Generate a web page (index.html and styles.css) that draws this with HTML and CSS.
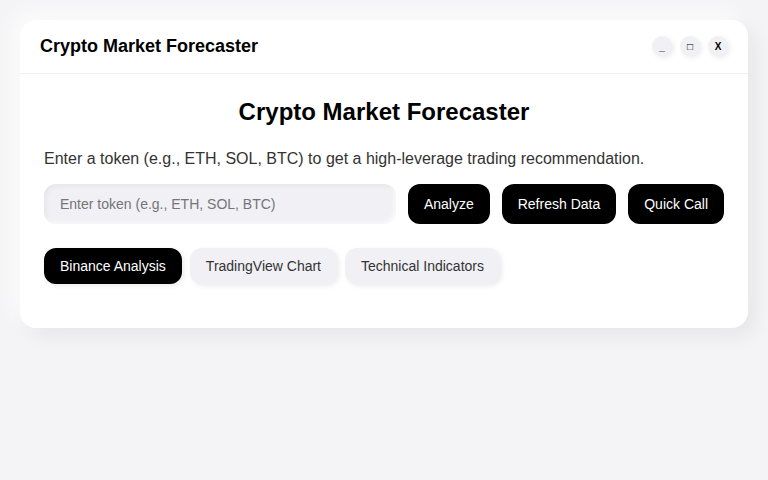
FILE: index.html
```html
<!DOCTYPE html>
<html lang="en">
<head>
<meta charset="utf-8">
<meta name="viewport" content="width=device-width, initial-scale=1">
<title>Crypto Market Forecaster</title>
<link rel="stylesheet" href="styles.css">
</head>
<body>
<div class="window">
  <header class="title-bar">
    <div class="title-text">Crypto Market Forecaster</div>
    <div class="controls">
      <button class="control" type="button" aria-label="Minimize">_</button>
      <button class="control" type="button" aria-label="Maximize">□</button>
      <button class="control" type="button" aria-label="Close">X</button>
    </div>
  </header>
  <main class="content">
    <h1>Crypto Market Forecaster</h1>
    <label class="intro" for="token">Enter a token (e.g., ETH, SOL, BTC) to get a high-leverage trading recommendation.</label>
    <form class="token-form">
      <input id="token" type="text" placeholder="Enter token (e.g., ETH, SOL, BTC)">
      <button class="action" type="button">Analyze</button>
      <button class="action" type="button">Refresh Data</button>
      <button class="action" type="button">Quick Call</button>
    </form>
    <nav class="tabs">
      <button class="tab active" type="button">Binance Analysis</button>
      <button class="tab" type="button">TradingView Chart</button>
      <button class="tab" type="button">Technical Indicators</button>
    </nav>
  </main>
</div>
</body>
</html>
```
FILE: styles.css
```css
* { box-sizing: border-box; }

body {
  margin: 0;
  padding: 20px;
  background: #f4f4f6;
  color: #333;
  font-family: "Liberation Sans", Arial, sans-serif;
}

button, input { font-family: inherit; }

.window {
  background: #fff;
  border-radius: 16px;
  box-shadow: 8px 8px 20px rgba(0, 0, 0, 0.06), -8px -8px 20px rgba(255, 255, 255, 0.8);
  overflow: hidden;
}

.title-bar {
  display: flex;
  justify-content: space-between;
  align-items: flex-start;
  padding: 16px 20px;
  border-bottom: 1px solid #f0f0f2;
}

.title-text {
  color: #000;
  font-size: 18px;
  font-weight: 700;
  line-height: 21px;
}

.controls {
  display: flex;
  gap: 8px;
}

.control {
  width: 20px;
  height: 20px;
  padding: 0;
  border: 0;
  border-radius: 50%;
  background: #f0f0f5;
  color: #000;
  font-size: 10px;
  font-weight: 700;
  box-shadow: 2px 2px 5px rgba(0, 0, 0, 0.08), -2px -2px 5px rgba(255, 255, 255, 0.8);
}

.content { padding: 24px; }

h1 {
  margin: 0 0 24px;
  color: #000;
  font-size: 24px;
  line-height: 28px;
  text-align: center;
}

.intro {
  display: block;
  margin-bottom: 16px;
  font-size: 16px;
  line-height: 18px;
}

.token-form {
  display: flex;
  gap: 12px;
  margin-bottom: 24px;
}

.token-form input {
  flex: 1;
  min-width: 0;
  padding: 12px 16px;
  border: 0;
  border-radius: 12px;
  background: #f0f0f5;
  font-size: 14px;
  box-shadow: inset 2px 2px 5px rgba(0, 0, 0, 0.05), inset -2px -2px 5px rgba(255, 255, 255, 0.8);
}

.action {
  padding: 12px 16px;
  border: 0;
  border-radius: 12px;
  background: #000;
  color: #fff;
  font-size: 14px;
}

.tabs {
  display: flex;
  gap: 8px;
  margin-bottom: 20px;
}

.tab {
  padding: 10px 16px;
  border: 0;
  border-radius: 12px;
  background: #f0f0f5;
  color: #333;
  font-size: 14px;
  box-shadow: 2px 2px 5px rgba(0, 0, 0, 0.08), -2px -2px 5px rgba(255, 255, 255, 0.8);
}

.tab.active {
  background: #000;
  color: #fff;
}
```
